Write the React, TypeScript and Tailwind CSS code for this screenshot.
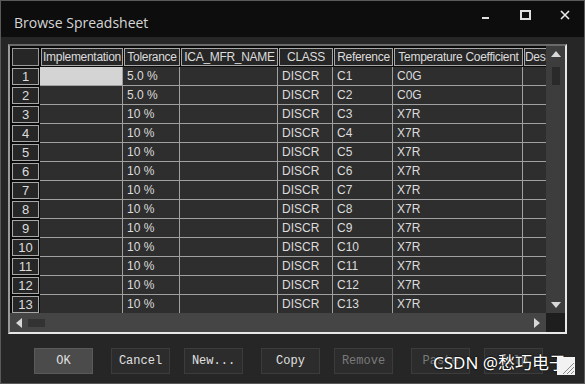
import React from 'react'

const cols = [
  { name: 'Implementation', w: 83 },
  { name: 'Tolerance', w: 57 },
  { name: 'ICA_MFR_NAME', w: 98 },
  { name: 'CLASS', w: 55 },
  { name: 'Reference', w: 60 },
  { name: 'Temperature Coefficient', w: 130 },
  { name: 'Description', w: 40 },
]

const rows = Array.from({ length: 13 }, (_, i) => [
  '',
  i < 2 ? '5.0 %' : '10 %',
  '',
  'DISCR',
  `C${i + 1}`,
  i < 2 ? 'C0G' : 'X7R',
  '',
])

const buttons = [
  { label: 'OK', ml: 'ml-[33px]', primary: true },
  { label: 'Cancel', ml: 'ml-[18px]' },
  { label: 'New...', ml: 'ml-[14px]' },
  { label: 'Copy', ml: 'ml-[18px]' },
  { label: 'Remove', ml: 'ml-[14px]', disabled: true },
  { label: 'Paste', ml: 'ml-[18px]', disabled: true },
  { label: 'Help', ml: 'ml-[14px]', disabled: true },
]

export default function App() {
  return (
    <div className="relative w-[585px] h-[384px] overflow-hidden bg-[#262626] border border-[#5a5a5a] flex flex-col font-['Liberation_Sans',sans-serif]">
      {/* Title bar */}
      <div className="h-[36px] shrink-0 bg-[#0d0d0d] flex items-center relative">
        <span className="ml-[13px] mt-[7px] text-[14px] text-[#d6d6d6] font-['Open_Sans',sans-serif]">Browse Spreadsheet</span>
        <div className="absolute left-[481px] top-[16px] w-[7px] h-[2px] bg-[#e0e0e0]" />
        <div className="absolute left-[519px] top-[9px] w-[11px] h-[10px] border-2 border-[#e0e0e0]" />
        <svg className="absolute left-[559px] top-[9px]" width="10" height="10" viewBox="0 0 10 10">
          <path d="M1 1 L9 9 M9 1 L1 9" stroke="#e8e8e8" strokeWidth="1.6" />
        </svg>
      </div>

      {/* Grid frame */}
      <div className="mt-[7px] ml-[7px] w-[559px] h-[290px] border-2 border-t-[#6a6a6a] border-l-[#9a9a9a] border-r-[#e8e8e8] border-b-[#e8e8e8] bg-[#1a1a1a] flex flex-col">
        <div className="flex h-[267px]">
          <div className="w-[536px] overflow-hidden bg-[#0a0a0a] pl-[1px] pt-[1px] text-[12px] text-[#dcdcdc]">
            {/* header */}
            <div className="flex h-[20px]">
              <div className="w-[29px] shrink-0 p-[1px]">
                <div className="h-full border border-[#9a9a9a] bg-[#262626]" />
              </div>
              {cols.map(c => (
                <div key={c.name} style={{ width: c.w }} className="shrink-0 p-[1px] pr-0">
                  <div className="h-full border border-[#a8a8a8] bg-[#262626] text-center overflow-hidden whitespace-nowrap leading-[16px] tracking-[-0.3px]">
                    {c.name}
                  </div>
                </div>
              ))}
            </div>
            {rows.map((r, i) => (
              <div key={i} className="flex h-[19px]">
                <div className="w-[29px] shrink-0 p-[1px]">
                  <div className="h-full border border-[#a8a8a8] bg-[#262626] flex items-center justify-center text-[13px] leading-none">
                    {i + 1}
                  </div>
                </div>
                {cols.map((c, j) => (
                  <div
                    key={c.name}
                    style={{ width: c.w }}
                    className={`shrink-0 border-r border-b border-[#a0a0a0] flex items-center pl-[4px] whitespace-nowrap leading-none ${
                      i === 0 && j === 0 ? 'bg-[#d4d4d4]' : 'bg-[#2e2e2e]'
                    }`}
                  >
                    {r[j]}
                  </div>
                ))}
              </div>
            ))}
          </div>
          {/* vertical scrollbar */}
          <div className="w-[19px] bg-[#3d3d3d] flex flex-col items-center relative">
            <svg className="mt-[5px]" width="10" height="6" viewBox="0 0 10 6">
              <path d="M0 6 L5 0 L10 6 Z" fill="#d8d8d8" />
            </svg>
            <div className="mt-[10px] w-[8px] h-[18px] bg-[#2a2a2a]" />
            <svg className="absolute bottom-[5px]" width="10" height="6" viewBox="0 0 10 6">
              <path d="M0 0 L10 0 L5 6 Z" fill="#d8d8d8" />
            </svg>
          </div>
        </div>
        {/* horizontal scrollbar */}
        <div className="flex h-[19px]">
          <div className="w-[536px] bg-[#454545] flex items-center relative">
            <svg className="ml-[6px]" width="6" height="10" viewBox="0 0 6 10">
              <path d="M6 0 L0 5 L6 10 Z" fill="#d8d8d8" />
            </svg>
            <div className="ml-[6px] w-[17px] h-[8px] bg-[#333333]" />
            <svg className="absolute right-[6px]" width="6" height="10" viewBox="0 0 6 10">
              <path d="M0 0 L6 5 L0 10 Z" fill="#d8d8d8" />
            </svg>
          </div>
          <div className="w-[19px] bg-[#1e1e1e]" />
        </div>
      </div>

      {/* Buttons */}
      <div className="flex mt-[14px]">
        {buttons.map(b => (
          <div
            key={b.label}
            className={`${b.ml} w-[59px] h-[26px] flex items-center justify-center border text-[12px] font-['Liberation_Mono',monospace] ${
              b.primary ? 'bg-[#4b4b4b] border-[#5a5a5a]' : 'bg-[#2c2c2c] border-[#3c3c3c]'
            } ${b.disabled ? 'text-[#7a7a7a]' : 'text-[#e0e0e0]'}`}
          >
            {b.label}
          </div>
        ))}
      </div>

      {/* watermark */}
      <div className="absolute left-[432px] top-[349px] text-[17px] text-white font-['Noto_Sans','Noto_Sans_CJK_SC',sans-serif] [text-shadow:0_0_2px_#000,0_0_1px_#000] whitespace-nowrap">
        CSDN @愁巧电子
      </div>
      <svg className="absolute left-[556px] top-[356px]" width="18" height="18" viewBox="0 0 18 18">
        <rect x="0" y="0" width="18" height="18" fill="#f2f2f2" />
        <path d="M17 6 L6 17 M17 10 L10 17 M17 14 L14 17" stroke="#8a8a8a" strokeWidth="1" />
      </svg>
    </div>
  )
}
